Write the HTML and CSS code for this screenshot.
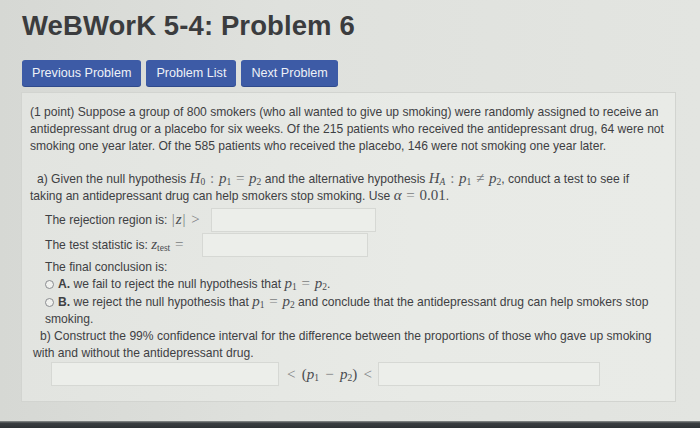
FILE: index.html
```html
<!DOCTYPE html>
<html>
<head>
<meta charset="utf-8">
<link rel="stylesheet" href="styles.css">
</head>
<body>
<div class="screen">
  <h1 class="title">WeBWorK 5-4: Problem 6</h1>
  <div class="nav">
    <span class="btn">Previous Problem</span>
    <span class="btn">Problem List</span>
    <span class="btn">Next Problem</span>
  </div>
  <div class="problem">
    <p class="intro">(1 point) Suppose a group of 800 smokers (who all wanted to give up smoking) were randomly assigned to receive an antidepressant drug or a placebo for six weeks. Of the 215 patients who received the antidepressant drug, 64 were not smoking one year later. Of the 585 patients who received the placebo, 146 were not smoking one year later.</p>
    <p class="parta">a) Given the null hypothesis <span class="m"><i>H</i><sub>0</sub> <span class="op">:</span> <i>p</i><sub>1</sub> <span class="op">=</span> <i>p</i><sub>2</sub></span> and the alternative hypothesis <span class="m"><i>H</i><sub><i>A</i></sub> <span class="op">:</span> <i>p</i><sub>1</sub> <span class="op">≠</span> <i>p</i><sub>2</sub></span>, conduct a test to see if taking an antidepressant drug can help smokers stop smoking. Use <span class="m"><i>α</i> <span class="op">=</span> 0.01</span>.</p>
    <div class="row rej">
      <span>The rejection region is: <span class="m"><span class="op">|</span><i>z</i><span class="op">|</span> <span class="op">&gt;</span></span></span>
      <span class="inp w1"></span>
    </div>
    <div class="row stat">
      <span>The test statistic is: <span class="m"><i>z</i><sub>test</sub> <span class="op">=</span></span></span>
      <span class="inp w2"></span>
    </div>
    <div class="final">The final conclusion is:</div>
    <div class="opt opta"><span class="radio"></span><b>A.</b> we fail to reject the null hypothesis that <span class="m"><i>p</i><sub>1</sub> <span class="op">=</span> <i>p</i><sub>2</sub></span>.</div>
    <div class="opt"><span class="radio"></span><b>B.</b> we reject the null hypothesis that <span class="m"><i>p</i><sub>1</sub> <span class="op">=</span> <i>p</i><sub>2</sub></span> and conclude that the antidepressant drug can help smokers stop smoking.</div>
    <p class="partb">b) Construct the 99% confidence interval for the difference between the proportions of those who gave up smoking with and without the antidepressant drug.</p>
    <div class="ci">
      <span class="inp w3"></span>
      <span class="m mid"><span class="op">&lt;</span> (<i>p</i><sub>1</sub> <span class="op">−</span> <i>p</i><sub>2</sub>) <span class="op">&lt;</span></span>
      <span class="inp w4"></span>
    </div>
  </div>
</div>
<div class="band"></div>
</body>
</html>
```

FILE: styles.css
```css
html, body {
  margin: 0;
  padding: 0;
}
body {
  width: 700px;
  height: 428px;
  overflow: hidden;
  background: linear-gradient(90deg, #d6d8d4 0%, #dfe1dd 40%, #e3e5e1 100%);
  font-family: "Liberation Sans", Arial, sans-serif;
  color: #3e4043;
}
.screen {
  height: 421px;
  padding-left: 22px;
  box-sizing: border-box;
  overflow: hidden;
}
.title {
  margin: 0;
  padding-top: 10px;
  font-size: 27.5px;
  line-height: 32px;
  font-weight: bold;
  color: #3b3c3e;
  letter-spacing: 0.1px;
}
.nav {
  display: flex;
  gap: 5px;
  margin-top: 18px;
}
.btn {
  display: inline-block;
  height: 26px;
  line-height: 26px;
  padding: 0 10px;
  background: #3d5ba6;
  color: #eef1f7;
  font-size: 12.6px;
  border-radius: 3px;
  box-shadow: 0 1px 0 #2f4a8c;
}
.problem {
  margin-top: 6px;
  margin-left: -1px;
  width: 655px;
  height: 310px;
  box-sizing: border-box;
  border: 1px solid #d2d4d0;
  background: linear-gradient(90deg, #e2e4e0 0%, #e8eae6 60%, #e9ebe7 100%);
  padding: 11px 4px 0 8px;
  font-size: 12.1px;
  line-height: 17px;
}
p { margin: 0; }
.parta {
  margin-top: 16px;
  text-indent: 7px;
  padding-right: 12px;
}
.m {
  font-family: "Liberation Serif", "Times New Roman", serif;
  font-size: 15px;
  line-height: 1;
  color: #4a4c50;
}
.m i { font-style: italic; }
.m sub { font-size: 9.5px; vertical-align: -2px; line-height: 0; }
.op { color: #7a7c80; padding: 0 1px; }
.row {
  display: flex;
  align-items: center;
  padding-left: 15px;
  height: 24px;
}
.rej { margin-top: 3px; }
.stat { margin-top: 1px; }
.inp {
  display: inline-block;
  height: 24px;
  box-sizing: border-box;
  border: 1px solid #d6d8d4;
  background: #eceeea;
}
.w1 { width: 165px; margin-left: 10px; }
.w2 { width: 166px; margin-left: 18px; }
.final {
  padding-left: 15px;
  margin-top: 2px;
}
.opt {
  padding-left: 15px;
  padding-right: 8px;
}
.opta { height: 18px; }
.radio {
  display: inline-block;
  width: 7px;
  height: 7px;
  border: 1px solid #8a8c90;
  border-radius: 50%;
  background: #f0f1ee;
  margin-right: 4px;
  vertical-align: -1px;
}
.opt b { font-weight: bold; }
.partb {
  text-indent: 7px;
  padding-left: 3px;
  padding-right: 8px;
}
.ci {
  display: flex;
  align-items: center;
  padding-left: 21px;
}
.w3 { width: 228px; }
.w4 { width: 222px; }
.mid { margin: 0 5px 0 7px; word-spacing: 1.5px; }
.band {
  height: 7px;
  background: linear-gradient(180deg, #8d918f 0%, #3a3e41 30%, #2e3235 100%);
}
```
